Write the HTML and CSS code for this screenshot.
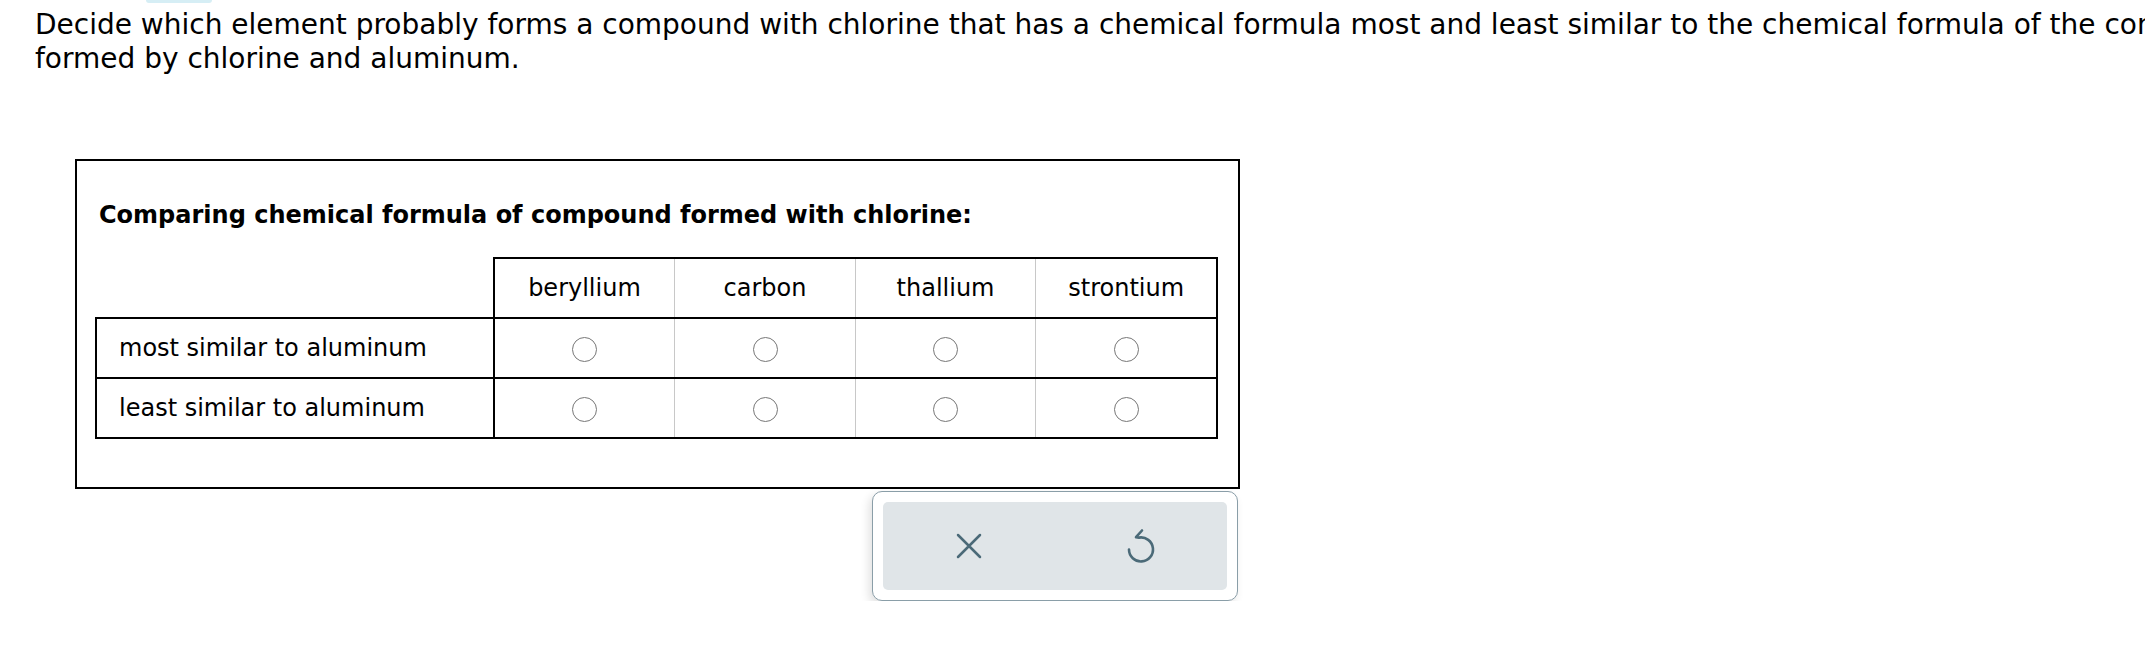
FILE: index.html
```html
<!DOCTYPE html>
<html>
<head>
<meta charset="utf-8">
<title>Compare chemical formulas</title>
<link rel="stylesheet" href="styles.css">
</head>
<body>
<div class="page">
  <div class="tab-hint"></div>
  <p class="prompt">Decide which element probably forms a compound with chlorine that has a chemical formula most and least similar to the chemical formula of the compound formed by chlorine and aluminum.</p>

  <div class="question-box">
    <div class="question-title">Comparing chemical formula of compound formed with chlorine:</div>
    <table class="grid">
      <thead>
        <tr>
          <th class="corner"></th>
          <th class="col first">beryllium</th>
          <th class="col">carbon</th>
          <th class="col">thallium</th>
          <th class="col last">strontium</th>
        </tr>
      </thead>
      <tbody>
        <tr>
          <td class="label">most similar to aluminum</td>
          <td class="cell first"><span class="radio"></span></td>
          <td class="cell"><span class="radio"></span></td>
          <td class="cell"><span class="radio"></span></td>
          <td class="cell last"><span class="radio"></span></td>
        </tr>
        <tr>
          <td class="label">least similar to aluminum</td>
          <td class="cell first"><span class="radio"></span></td>
          <td class="cell"><span class="radio"></span></td>
          <td class="cell"><span class="radio"></span></td>
          <td class="cell last"><span class="radio"></span></td>
        </tr>
      </tbody>
    </table>
  </div>

  <div class="actions-row">
    <div class="actions">
      <div class="actions-inner">
        <button class="action" aria-label="Clear">
          <svg width="26" height="26" viewBox="0 0 26 26"><path d="M2 2 L24 24 M24 2 L2 24" stroke="#4b6a78" stroke-width="2.5" stroke-linecap="round" fill="none"/></svg>
        </button>
        <button class="action" aria-label="Reset">
          <svg width="32" height="36" viewBox="0 0 32 36"><path d="M17 2.5 L11 9.2 L14 9.6 A12 12 0 1 1 4 21.5" stroke="#4b6a78" stroke-width="2.6" stroke-linecap="round" stroke-linejoin="round" fill="none"/></svg>
        </button>
      </div>
    </div>
  </div>
</div>
</body>
</html>
```
FILE: styles.css
```css
html, body {
  margin: 0;
  padding: 0;
  overflow: hidden;
  background: #ffffff;
}

.page {
  padding-left: 35px;
  font-family: "DejaVu Sans", Verdana, sans-serif;
  color: #000;
}

.tab-hint {
  margin-left: 111px;
  width: 66px;
  height: 3px;
  background: #d6eef5;
  border-radius: 0 0 30px 30px;
}

.prompt {
  width: 2270px;
  margin: 0;
  padding-top: 5px;
  font-size: 28px;
  line-height: 34px;
}

.question-box {
  margin-top: 83px;
  margin-left: 40px;
  border: 2px solid #000;
  padding: 40px 20px 48px 18px;
  box-sizing: content-box;
  width: 1123px;
}

.question-title {
  font-weight: bold;
  font-size: 24px;
  line-height: 28px;
  padding-left: 4px;
  margin-bottom: 28px;
}

.grid {
  border-collapse: collapse;
  font-size: 24px;
}

.grid th, .grid td {
  padding: 0;
  height: 58px;
}

.corner {
  width: 398px;
  border: none;
}

.col {
  width: 180px;
  font-weight: normal;
  text-align: center;
  border-top: 2px solid #000;
  border-bottom: 2px solid #000;
  border-left: 1px solid #c8c8c8;
}

.first {
  border-left: 2px solid #000 !important;
}

.last {
  border-right: 2px solid #000;
}

.label {
  border: 2px solid #000;
  padding-left: 22px !important;
  text-align: left;
}

.cell {
  text-align: center;
  border-bottom: 2px solid #000;
  border-left: 1px solid #c8c8c8;
}

.radio {
  display: inline-block;
  width: 23px;
  height: 23px;
  border: 1.5px solid #777;
  border-radius: 50%;
  vertical-align: middle;
}

.actions-row {
  display: flex;
  margin-left: 837px;
  margin-top: 2px;
}

.actions {
  width: 344px;
  padding: 10px;
  border: 1.5px solid #8a9ea8;
  border-radius: 10px;
  background: #fff;
  box-shadow: -3px 4px 10px rgba(0, 0, 0, 0.12);
}

.actions-inner {
  display: flex;
  height: 88px;
  background: #e0e5e8;
  border-radius: 5px;
}

.action {
  flex: 1;
  border: none;
  background: transparent;
  display: flex;
  align-items: center;
  justify-content: center;
  padding: 0;
}
```
